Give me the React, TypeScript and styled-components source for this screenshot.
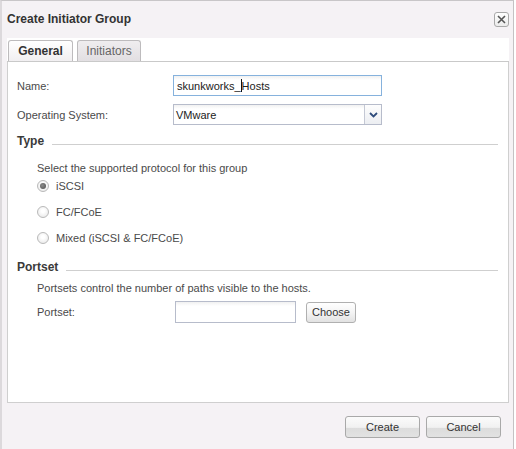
import React, { useState } from "react";
import styled, { createGlobalStyle } from "styled-components";

const GlobalStyle = createGlobalStyle`
  html, body {
    margin: 0;
    padding: 0;
    background: #ffffff;
  }
  body {
    font-family: "Liberation Sans", Arial, sans-serif;
    font-size: 11px;
    color: #444;
  }
  * { box-sizing: border-box; }
`;

const Dialog = styled.div`
  width: 514px;
  height: 449px;
  display: flex;
  flex-direction: column;
  background: #f5f2f5;
  border-top: 1px solid #c8c6c8;
  border-left: 2px solid #dcd9dc;
  border-right: 1px solid #c4c2c4;
`;

const TitleBar = styled.div`
  height: 37px;
  display: flex;
  align-items: center;
  justify-content: space-between;
  padding: 0 4px 0 5px;
`;

const Title = styled.div`
  font-size: 12px;
  font-weight: bold;
  color: #333;
  margin-top: -1px;
`;

const CloseButton = styled.button`
  width: 15px;
  height: 15px;
  padding: 0;
  display: flex;
  align-items: center;
  justify-content: center;
  border: 1px solid #a9a9a9;
  border-radius: 3px;
  background: linear-gradient(#ffffff, #ebebeb);
  cursor: pointer;
`;

const TabStrip = styled.div`
  height: 24px;
  margin: 0 4px 0 5px;
  padding: 2px 0 0 1px;
  display: flex;
  gap: 4px;
  background: #ffffff;
  border-bottom: 1px solid #c9c9c9;
`;

const Tab = styled.div<{ $active?: boolean }>`
  width: ${({ $active }) => ($active ? "65px" : "64px")};
  height: 21px;
  display: flex;
  align-items: center;
  justify-content: center;
  font-size: 12px;
  font-weight: ${({ $active }) => ($active ? "bold" : "normal")};
  color: ${({ $active }) => ($active ? "#333" : "#666")};
  border: 1px solid #bdbbbd;
  border-bottom: none;
  border-radius: 3px 3px 0 0;
  background: ${({ $active }) =>
    $active ? "linear-gradient(#ffffff, #f1eff1)" : "linear-gradient(#efedef, #e2dfe2)"};
  cursor: pointer;
`;

const Panel = styled.div`
  flex: 1;
  margin: 0 4px 0 5px;
  padding: 13px 10px 0 9px;
  background: #ffffff;
  border: 1px solid #cfcfcf;
  border-top: none;
  display: flex;
  flex-direction: column;
`;

const FieldRow = styled.div<{ $indent?: boolean; $mt?: number }>`
  display: flex;
  align-items: center;
  height: ${({ $indent }) => ($indent ? "22px" : "21px")};
  margin-top: ${({ $mt }) => $mt ?? 0}px;
  padding-left: ${({ $indent }) => ($indent ? "20px" : "0")};
`;

const Label = styled.div<{ $width: number }>`
  width: ${({ $width }) => $width}px;
  flex-shrink: 0;
  color: #4a4a4a;
`;

const TextBox = styled.div<{ $width: number; $focused?: boolean }>`
  width: ${({ $width }) => $width}px;
  height: 100%;
  display: flex;
  align-items: center;
  padding-left: 3px;
  font-size: 11px;
  color: #222;
  border: 1px solid ${({ $focused }) => ($focused ? "#86b2dd" : "#b7bccb")};
  background: linear-gradient(#f1f1f1 0, #ffffff 4px);
`;

const Caret = styled.span`
  display: inline-block;
  width: 1px;
  height: 13px;
  background: #111;
`;

const SelectBox = styled.div`
  width: 209px;
  height: 100%;
  display: flex;
  border: 1px solid #b7bccb;
  background: linear-gradient(#f1f1f1 0, #ffffff 4px);
`;

const SelectText = styled.div`
  flex: 1;
  display: flex;
  align-items: center;
  padding-left: 2px;
  color: #222;
`;

const SelectArrow = styled.div`
  width: 17px;
  display: flex;
  align-items: center;
  justify-content: center;
  border-left: 1px solid #c4c8d4;
  background: linear-gradient(#fdfdfd, #eceef2);
`;

const SectionHeader = styled.div<{ $mt: number }>`
  display: flex;
  align-items: center;
  gap: 8px;
  margin-top: ${({ $mt }) => $mt}px;
  font-size: 12px;
  font-weight: bold;
  color: #3a3a3a;

  &::after {
    content: "";
    flex: 1;
    height: 1px;
    margin-top: 7px;
    background: #cfcfcf;
  }
`;

const Description = styled.div<{ $mt: number }>`
  margin-top: ${({ $mt }) => $mt}px;
  padding-left: 20px;
  color: #4a4a4a;
`;

const RadioRow = styled.label<{ $mt: number }>`
  display: flex;
  align-items: center;
  gap: 7px;
  margin-top: ${({ $mt }) => $mt}px;
  padding-left: 20px;
  color: #4a4a4a;
  cursor: pointer;
`;

const RadioCircle = styled.span<{ $checked: boolean }>`
  width: 12px;
  height: 12px;
  border-radius: 50%;
  border: 1px solid #b9b9b9;
  background: radial-gradient(circle at 50% 40%, #ffffff 20%, #e4e4e4 100%);
  display: flex;
  align-items: center;
  justify-content: center;

  &::after {
    content: "";
    width: 6px;
    height: 6px;
    border-radius: 50%;
    background: ${({ $checked }) =>
      $checked ? "radial-gradient(circle at 40% 40%, #8a8a8a, #4e4e4e)" : "transparent"};
  }
`;

const SmallButton = styled.button`
  margin-left: 10px;
  width: 50px;
  height: 21px;
  padding: 0;
  font-family: "Liberation Sans", Arial, sans-serif;
  font-size: 11px;
  color: #333;
  border: 1px solid #b0b0b0;
  border-radius: 3px;
  background: linear-gradient(#ffffff 0, #f4f4f4 50%, #e2e2e2 100%);
  cursor: pointer;
`;

const Footer = styled.div`
  height: 46px;
  display: flex;
  justify-content: flex-end;
  align-items: flex-start;
  gap: 6px;
  padding: 13px 12px 0 0;
`;

const FooterButton = styled.button`
  width: 75px;
  height: 22px;
  padding: 0;
  font-family: "Liberation Sans", Arial, sans-serif;
  font-size: 11px;
  color: #333;
  border: 1px solid #a9a9a9;
  border-radius: 3px;
  background: linear-gradient(#fbfbfb 0, #f1f1f1 52%, #dcdcdc 56%, #e2e2e2 100%);
  cursor: pointer;
`;

const protocols = ["iSCSI", "FC/FCoE", "Mixed (iSCSI & FC/FCoE)"];

export default function App() {
  const [protocol, setProtocol] = useState("iSCSI");

  return (
    <>
      <GlobalStyle />
      <Dialog>
        <TitleBar>
          <Title>Create Initiator Group</Title>
          <CloseButton aria-label="Close">
            <svg width="9" height="9" viewBox="0 0 9 9">
              <path d="M1 1 L8 8 M8 1 L1 8" stroke="#555" strokeWidth="1.6" />
            </svg>
          </CloseButton>
        </TitleBar>
        <TabStrip>
          <Tab $active>General</Tab>
          <Tab>Initiators</Tab>
        </TabStrip>
        <Panel>
          <FieldRow>
            <Label $width={156}>Name:</Label>
            <TextBox $width={209} $focused>
              skunkworks_<Caret />Hosts
            </TextBox>
          </FieldRow>
          <FieldRow $mt={8}>
            <Label $width={156}>Operating System:</Label>
            <SelectBox>
              <SelectText>VMware</SelectText>
              <SelectArrow>
                <svg width="9" height="6" viewBox="0 0 9 6">
                  <path d="M1 1 L4.5 4.5 L8 1" fill="none" stroke="#2f4c7c" strokeWidth="1.8" />
                </svg>
              </SelectArrow>
            </SelectBox>
          </FieldRow>

          <SectionHeader $mt={9}>Type</SectionHeader>
          <Description $mt={14}>Select the supported protocol for this group</Description>
          {protocols.map((p, i) => (
            <RadioRow key={p} $mt={i === 0 ? 6 : 14} onClick={() => setProtocol(p)}>
              <RadioCircle $checked={protocol === p} />
              {p}
            </RadioRow>
          ))}

          <SectionHeader $mt={16}>Portset</SectionHeader>
          <Description $mt={8}>Portsets control the number of paths visible to the hosts.</Description>
          <FieldRow $indent $mt={7}>
            <Label $width={138}>Portset:</Label>
            <TextBox $width={121} />
            <SmallButton>Choose</SmallButton>
          </FieldRow>
        </Panel>
        <Footer>
          <FooterButton>Create</FooterButton>
          <FooterButton>Cancel</FooterButton>
        </Footer>
      </Dialog>
    </>
  );
}
